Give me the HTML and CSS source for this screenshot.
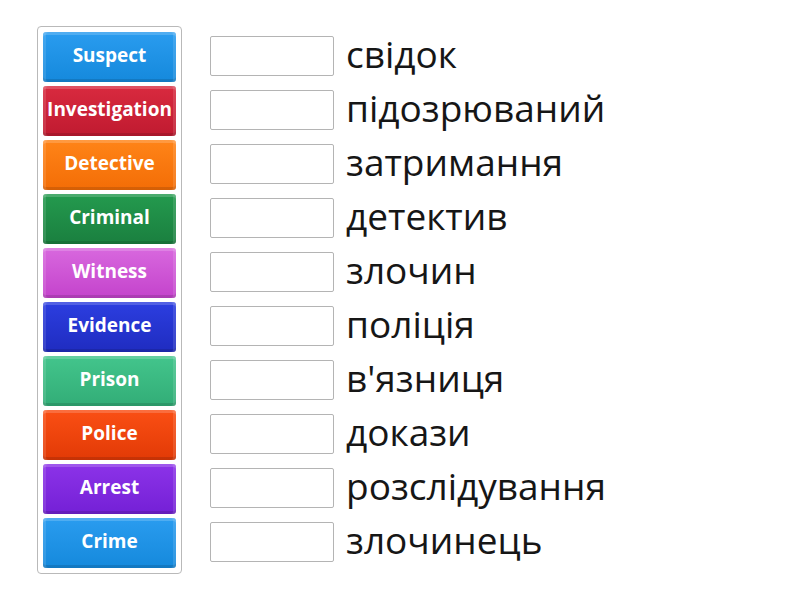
FILE: index.html
```html
<!DOCTYPE html>
<html>
<head>
<meta charset="utf-8">
<link rel="stylesheet" href="styles.css">
</head>
<body>
<div class="page">
  <div class="bank">
    <div class="tile c-suspect">Suspect</div>
    <div class="tile c-invest">Investigation</div>
    <div class="tile c-detective">Detective</div>
    <div class="tile c-criminal">Criminal</div>
    <div class="tile c-witness">Witness</div>
    <div class="tile c-evidence">Evidence</div>
    <div class="tile c-prison">Prison</div>
    <div class="tile c-police">Police</div>
    <div class="tile c-arrest">Arrest</div>
    <div class="tile c-crime">Crime</div>
  </div>
  <div class="answers">
    <div class="row"><div class="slot"></div><span class="word">свідок</span></div>
    <div class="row"><div class="slot"></div><span class="word">підозрюваний</span></div>
    <div class="row"><div class="slot"></div><span class="word">затримання</span></div>
    <div class="row"><div class="slot"></div><span class="word">детектив</span></div>
    <div class="row"><div class="slot"></div><span class="word">злочин</span></div>
    <div class="row"><div class="slot"></div><span class="word">поліція</span></div>
    <div class="row"><div class="slot"></div><span class="word">в'язниця</span></div>
    <div class="row"><div class="slot"></div><span class="word">докази</span></div>
    <div class="row"><div class="slot"></div><span class="word">розслідування</span></div>
    <div class="row"><div class="slot"></div><span class="word">злочинець</span></div>
  </div>
</div>
</body>
</html>
```
FILE: styles.css
```css
html, body {
  margin: 0;
  padding: 0;
  background: #ffffff;
  font-family: "Open Sans", "Liberation Sans", sans-serif;
}
.page {
  display: flex;
  align-items: flex-start;
  gap: 28px;
  padding: 26px 0 0 37px;
}
.bank {
  display: flex;
  flex-direction: column;
  gap: 4px;
  padding: 5px;
  border: 1px solid #b9b9b9;
  border-radius: 4px;
}
.tile {
  width: 133px;
  height: 50px;
  box-sizing: border-box;
  border-radius: 3px;
  display: flex;
  align-items: center;
  justify-content: center;
  padding-bottom: 5px;
  color: #ffffff;
  font-weight: 700;
  font-size: 19px;
  white-space: nowrap;
  box-shadow:
    inset 0 3px 0 rgba(255, 255, 255, 0.18),
    inset 3px 0 0 rgba(255, 255, 255, 0.12),
    inset -3px 0 0 rgba(255, 255, 255, 0.12),
    inset 0 -3px 0 rgba(0, 0, 0, 0.12);
}
.c-suspect { background: linear-gradient(#2a9cef, #1589dc); }
.c-invest { background: linear-gradient(#d92a3f, #c01a30); }
.c-detective { background: linear-gradient(#ff8418, #f36d06); }
.c-criminal { background: linear-gradient(#249a4e, #1a7f3f); }
.c-witness { background: linear-gradient(#d868de, #c443cc); }
.c-evidence { background: linear-gradient(#2c3ee0, #1f2cc0); }
.c-prison { background: linear-gradient(#43c58c, #32ad77); }
.c-police { background: linear-gradient(#fa4f14, #e23a06); }
.c-arrest { background: linear-gradient(#8c33e8, #7420d6); }
.c-crime { background: linear-gradient(#2a9cef, #1589dc); }

.answers {
  display: flex;
  flex-direction: column;
  gap: 14px;
  padding-top: 10px;
}
.row {
  display: flex;
  align-items: center;
  gap: 12px;
  height: 40px;
}
.slot {
  width: 124px;
  height: 40px;
  box-sizing: border-box;
  border: 1px solid #b4b4b4;
  border-radius: 2px;
  background: #ffffff;
  flex: none;
}
.word {
  font-size: 37px;
  color: #161616;
  white-space: nowrap;
  line-height: 40px;
  margin-top: -4px;
}
```
